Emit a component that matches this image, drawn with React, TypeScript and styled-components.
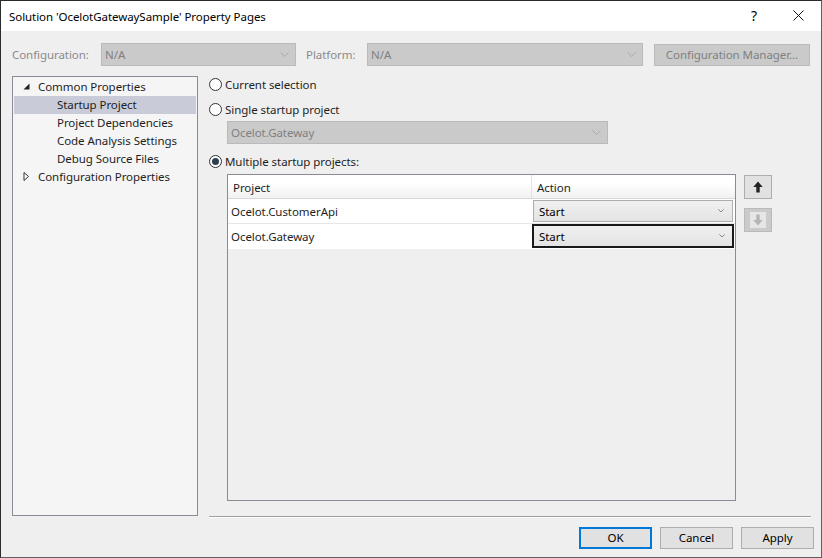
import * as React from "react";
import styled, { createGlobalStyle } from "styled-components";

const GlobalStyle = createGlobalStyle`
  html, body {
    margin: 0;
    padding: 0;
    background: #efefef;
  }
  * {
    box-sizing: border-box;
  }
`;

const Dialog = styled.div`
  width: 822px;
  height: 558px;
  display: flex;
  flex-direction: column;
  background: #efefef;
  border: 1px solid #5f5f5f;
  border-top-color: #2b2b2b;
  border-left-color: #2b2b2b;
  font-family: "Noto Sans", "Liberation Sans", sans-serif;
  font-size: 11.5px;
  letter-spacing: -0.06px;
  color: #1e1e1e;
  overflow: hidden;
`;

const TitleBar = styled.div`
  height: 30px;
  flex: none;
  display: flex;
  align-items: center;
  background: #fff;
  padding-left: 8px;
  color: #000;
`;

const TitleText = styled.div`
  flex: 1;
`;

const TitleIcon = styled.div<{ $shift?: number }>`
  width: 46px;
  height: 30px;
  display: flex;
  align-items: center;
  justify-content: center;
  padding: 0 0 2px ${(p) => p.$shift ?? 0}px;
  font-size: 14px;
`;

const Body = styled.div`
  flex: 1;
  display: flex;
  flex-direction: column;
  padding: 12px 11px 0 11px;
`;

const ConfigRow = styled.div`
  display: flex;
  align-items: center;
  height: 23px;
`;

const DimLabel = styled.div<{ $width: number; $pad?: number }>`
  width: ${(p) => p.$width}px;
  padding-left: ${(p) => p.$pad ?? 0}px;
  color: #8a8a8a;
`;

const Combo = styled.div<{ $width: number }>`
  width: ${(p) => p.$width}px;
  height: 23px;
  flex: none;
  display: flex;
  align-items: center;
  justify-content: space-between;
  padding: 0 4px 0 3px;
  background: #cacaca;
  border: 1px solid #bababa;
  color: #808080;
`;

const ManagerButton = styled.div`
  width: 156px;
  height: 22px;
  margin-left: 11px;
  display: flex;
  align-items: center;
  justify-content: center;
  background: #cacaca;
  border: 1px solid #bababa;
  color: #808080;
`;

const Main = styled.div`
  display: flex;
  margin-top: 10px;
`;

const Tree = styled.div`
  width: 186px;
  height: 440px;
  flex: none;
  padding: 1px;
  background: #f5f5f5;
  border: 1px solid #8b8b95;
`;

const TreeRow = styled.div<{ $indent: number; $selected?: boolean }>`
  height: 18px;
  display: flex;
  align-items: center;
  padding: 0 0 2px ${(p) => p.$indent}px;
  background: ${(p) => (p.$selected ? "#c9cbd9" : "transparent")};
`;

const Caret = styled.svg`
  width: 9px;
  height: 9px;
  margin-right: 7px;
  flex: none;
`;

const RightPane = styled.div`
  flex: 1;
  display: flex;
  flex-direction: column;
  margin-left: 11px;
`;

const RadioRow = styled.div<{ $top: number }>`
  display: flex;
  align-items: center;
  height: 18px;
  margin-top: ${(p) => p.$top}px;
`;

const RadioCircle = styled.span<{ $checked?: boolean }>`
  width: 13px;
  height: 13px;
  flex: none;
  margin-right: 3px;
  display: flex;
  align-items: center;
  justify-content: center;
  border-radius: 50%;
  background: #fff;
  border: 1px solid #333;
  &::after {
    content: "";
    display: ${(p) => (p.$checked ? "block" : "none")};
    width: 7px;
    height: 7px;
    border-radius: 50%;
    background: #2f3f52;
  }
`;

const Indented = styled.div<{ $top: number }>`
  margin-left: 18px;
  margin-top: ${(p) => p.$top}px;
`;

const GridRow = styled.div`
  display: flex;
  align-items: flex-start;
  margin-top: 4px;
`;

const Grid = styled.div`
  width: 509px;
  height: 327px;
  margin-left: 18px;
  flex: none;
  border: 1px solid #8b8b95;
  background: #efefef;
`;

const GridHead = styled.div`
  display: flex;
  height: 24px;
  background: linear-gradient(#ffffff 35%, #f1f1f1);
  border-bottom: 1px solid #d8d8d8;
`;

const HeadCell = styled.div<{ $width?: number }>`
  width: ${(p) => (p.$width ? `${p.$width}px` : "auto")};
  flex: ${(p) => (p.$width ? "none" : "1")};
  display: flex;
  align-items: center;
  padding: 2px 0 0 5px;
  border-right: 1px solid ${(p) => (p.$width ? "#e2e2e2" : "transparent")};
`;

const GridLine = styled.div<{ $last?: boolean }>`
  display: flex;
  align-items: center;
  height: 25px;
  background: #fff;
  border-bottom: 1px solid ${(p) => (p.$last ? "transparent" : "#e6e6e6")};
`;

const ProjectName = styled.div`
  width: 304px;
  padding-left: 3px;
`;

const ActionCombo = styled.div<{ $focused?: boolean }>`
  height: ${(p) => (p.$focused ? 24 : 22)}px;
  width: ${(p) => (p.$focused ? 202 : 200)}px;
  margin-left: ${(p) => (p.$focused ? 0 : 1)}px;
  display: flex;
  align-items: center;
  justify-content: space-between;
  padding: 0 ${(p) => (p.$focused ? 5 : 6)}px 0 5px;
  background: linear-gradient(#f0f0f0, #e4e4e4);
  border: ${(p) => (p.$focused ? "2px solid #1a1a1a" : "1px solid #adadad")};
  color: #000;
`;

const MoveColumn = styled.div`
  margin-left: 8px;
  display: flex;
  flex-direction: column;
  gap: 9px;
  padding-top: 1px;
`;

const MoveButton = styled.div<{ $disabled?: boolean }>`
  width: 28px;
  height: 24px;
  display: flex;
  align-items: center;
  justify-content: center;
  background: ${(p) => (p.$disabled ? "#cacaca" : "#e1e1e1")};
  border: 1px solid ${(p) => (p.$disabled ? "#bababa" : "#adadad")};
`;

const DisabledGlyph = styled.div`
  width: 16px;
  height: 16px;
  display: flex;
  align-items: center;
  justify-content: center;
  background: #e6e6e6;
`;

const Separator = styled.div`
  height: 2px;
  width: 602px;
  margin-right: -1px;
  align-self: flex-end;
  border-top: 1px solid #a0a0a0;
  border-bottom: 1px solid #fff;
`;

const Footer = styled.div`
  display: flex;
  justify-content: flex-end;
  gap: 8px;
  margin-top: 9px;
  margin-right: -4px;
`;

const FooterButton = styled.div<{ $primary?: boolean }>`
  width: 73px;
  height: 22px;
  display: flex;
  align-items: center;
  justify-content: center;
  padding-bottom: 2px;
  background: #e1e1e1;
  border: ${(p) => (p.$primary ? "2px solid #0078d7" : "1px solid #adadad")};
  color: #000;
`;

const Chevron = ({ color, size = 9 }: { color: string; size?: number }) => (
  <svg width={size} height={size * 0.6} viewBox="0 0 10 6" fill="none" style={{ marginRight: 2 }}>
    <path d="M0.5 0.5 L5 5 L9.5 0.5" stroke={color} strokeWidth="1" />
  </svg>
);

const UpArrow = () => (
  <svg width="10" height="12" viewBox="0 0 10 12">
    <path d="M5 0.5 L9.7 6 L6.7 6 L6.7 11.5 L3.3 11.5 L3.3 6 L0.3 6 Z" fill="#222" />
  </svg>
);

const DownArrow = () => (
  <svg width="10" height="12" viewBox="0 0 10 12">
    <path d="M5 11.5 L9.7 6 L6.7 6 L6.7 0.5 L3.3 0.5 L3.3 6 L0.3 6 Z" fill="#b4b4b4" />
  </svg>
);

export default function App() {
  return (
    <>
      <GlobalStyle />
      <Dialog>
        <TitleBar>
          <TitleText>Solution 'OcelotGatewaySample' Property Pages</TitleText>
          <TitleIcon $shift={4}>?</TitleIcon>
          <TitleIcon>
            <svg width="11" height="11" viewBox="0 0 11 11">
              <path d="M0.5 0.5 L10.5 10.5 M10.5 0.5 L0.5 10.5" stroke="#111" strokeWidth="1" />
            </svg>
          </TitleIcon>
        </TitleBar>
        <Body>
          <ConfigRow>
            <DimLabel $width={89}>Configuration:</DimLabel>
            <Combo $width={195}>
              N/A
              <Chevron color="#a8a8a8" />
            </Combo>
            <DimLabel $width={71} $pad={10}>Platform:</DimLabel>
            <Combo $width={276}>
              N/A
              <Chevron color="#a8a8a8" />
            </Combo>
            <ManagerButton>Configuration Manager...</ManagerButton>
          </ConfigRow>
          <Main>
            <Tree>
              <TreeRow $indent={8}>
                <Caret viewBox="0 0 9 9">
                  <path d="M7.5 1.5 L7.5 7.5 L1.5 7.5 Z" fill="#222" />
                </Caret>
                Common Properties
              </TreeRow>
              <TreeRow $indent={43} $selected>Startup Project</TreeRow>
              <TreeRow $indent={43}>Project Dependencies</TreeRow>
              <TreeRow $indent={43}>Code Analysis Settings</TreeRow>
              <TreeRow $indent={43}>Debug Source Files</TreeRow>
              <TreeRow $indent={8}>
                <Caret viewBox="0 0 9 9">
                  <path d="M2 0.5 L6.5 4.5 L2 8.5 Z" fill="#fff" stroke="#333" />
                </Caret>
                Configuration Properties
              </TreeRow>
            </Tree>
            <RightPane>
              <RadioRow $top={-1}>
                <RadioCircle />
                Current selection
              </RadioRow>
              <RadioRow $top={7}>
                <RadioCircle />
                Single startup project
              </RadioRow>
              <Indented $top={3}>
                <Combo $width={381}>
                  Ocelot.Gateway
                  <Chevron color="#a8a8a8" />
                </Combo>
              </Indented>
              <RadioRow $top={8}>
                <RadioCircle $checked />
                Multiple startup projects:
              </RadioRow>
              <GridRow>
                <Grid>
                  <GridHead>
                    <HeadCell $width={304}>Project</HeadCell>
                    <HeadCell>Action</HeadCell>
                  </GridHead>
                  <GridLine>
                    <ProjectName>Ocelot.CustomerApi</ProjectName>
                    <ActionCombo>
                      Start
                      <Chevron color="#444" size={6} />
                    </ActionCombo>
                  </GridLine>
                  <GridLine $last>
                    <ProjectName>Ocelot.Gateway</ProjectName>
                    <ActionCombo $focused>
                      Start
                      <Chevron color="#444" size={6} />
                    </ActionCombo>
                  </GridLine>
                </Grid>
                <MoveColumn>
                  <MoveButton>
                    <UpArrow />
                  </MoveButton>
                  <MoveButton $disabled>
                    <DisabledGlyph>
                      <DownArrow />
                    </DisabledGlyph>
                  </MoveButton>
                </MoveColumn>
              </GridRow>
            </RightPane>
          </Main>
          <Separator />
          <Footer>
            <FooterButton $primary>OK</FooterButton>
            <FooterButton>Cancel</FooterButton>
            <FooterButton>Apply</FooterButton>
          </Footer>
        </Body>
      </Dialog>
    </>
  );
}
